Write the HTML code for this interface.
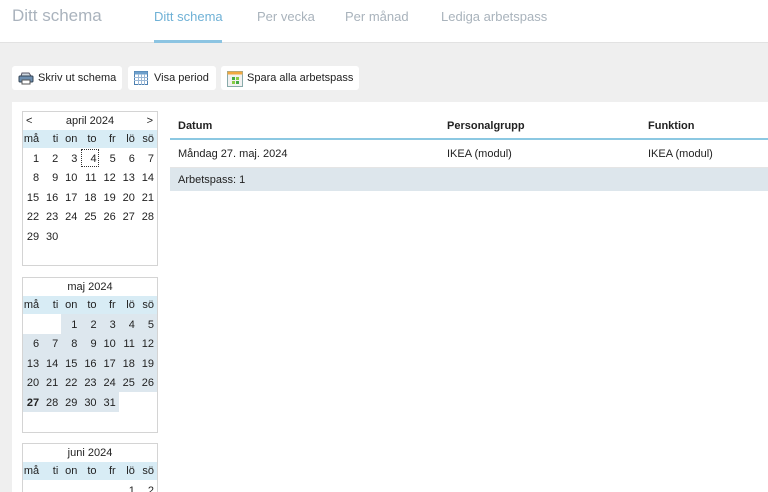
<!DOCTYPE html>
<html style="overflow:hidden;width:768px;height:492px"><head><meta charset="utf-8"><style>
*{box-sizing:border-box;margin:0;padding:0}
body{width:768px;height:492px;overflow:hidden;background:#efefef;font-family:"Liberation Sans",Arial,sans-serif;font-size:11px;color:#222;position:relative}
.hdr{position:absolute;left:0;top:0;width:768px;height:43px;background:#fff;border-bottom:1px solid #e2e2e2}
.title{position:absolute;left:12px;top:6px;font-size:17px;color:#aab3bd}
.tab{position:absolute;top:9px;font-size:13px;color:#a9b3bc}
.tab.act{color:#6fb1d6}
.ul{position:absolute;left:154px;top:40px;width:68px;height:3px;background:#8cc4e2}
.btn{position:absolute;top:66px;height:24px;background:#fff;border-radius:3px;font-size:11px;line-height:24px;padding-left:26px}
.btn svg{position:absolute;left:6px;top:5px}
.main{position:absolute;left:12px;top:102px;width:756px;height:390px;background:#fff}
.cal{position:absolute;left:22px;width:136px;border:1px solid #d4d4d4;background:#fff;overflow:hidden}
.ch{height:18px;line-height:18px;text-align:center;font-size:11px;position:relative}
.ch .l{position:absolute;left:3px}.ch .r{position:absolute;right:4px}
table.c{border-collapse:collapse;width:134px}
table.c td{width:19.1px;height:19.5px;text-align:right;padding-right:3px;font-size:11px;padding-top:2px}
table.c tr.d td{background:#d8ecf5;height:18px;padding-top:0}
table.c td.h{background:#dde7ee}
.t{position:absolute;left:170px;width:598px}
</style></head><body>
<div class="hdr">
<div class="title">Ditt schema</div>
<div class="tab act" style="left:154px">Ditt schema</div>
<div class="tab" style="left:257px">Per vecka</div>
<div class="tab" style="left:345px">Per månad</div>
<div class="tab" style="left:441px">Lediga arbetspass</div>
<div class="ul"></div>
</div>
<div class="btn" style="left:12px;width:110px"><svg width="16" height="14"><path d="M4 2h7l2 3H3z" fill="#cfd8e0" stroke="#556"/><rect x="1" y="5" width="14" height="6" rx="1" fill="#6d8eb0" stroke="#345"/><rect x="4" y="9" width="8" height="4" fill="#fff" stroke="#555"/></svg>Skriv ut schema</div>
<div class="btn" style="left:128px;width:88px"><svg width="14" height="14"><rect x="0.5" y="0.5" width="13" height="13" fill="#fff" stroke="#4c7fb0"/><rect x="0.5" y="0.5" width="13" height="3" fill="#6ea0cc"/><path d="M4.5 3v11M7.5 3v11M10.5 3v11M0 6.5h14M0 9.5h14" stroke="#9bb8d6"/></svg>Visa period</div>
<div class="btn" style="left:221px;width:138px"><svg width="16" height="16"><rect x="0.5" y="0.5" width="15" height="15" fill="#f1f1f1" stroke="#8aa"/><rect x="0.5" y="0.5" width="15" height="3" fill="#f0a840"/><rect x="5" y="6" width="3" height="3" fill="#4a4"/><rect x="9" y="6" width="3" height="3" fill="#8c4"/><rect x="5" y="10" width="3" height="3" fill="#8c4"/><rect x="9" y="10" width="3" height="3" fill="#4a4"/></svg>Spara alla arbetspass</div>
<div class="main"></div>

<div class="cal" style="top:111px;height:155px">
<div class="ch"><span class="l">&lt;</span>april 2024<span class="r">&gt;</span></div>
<table class="c">
<tr class="d"><td>må</td><td>ti</td><td>on</td><td>to</td><td>fr</td><td>lö</td><td>sö</td></tr>
<tr><td>1</td><td>2</td><td>3</td><td style="outline:1px dotted #333;outline-offset:-2px">4</td><td>5</td><td>6</td><td>7</td></tr>
<tr><td>8</td><td>9</td><td>10</td><td>11</td><td>12</td><td>13</td><td>14</td></tr>
<tr><td>15</td><td>16</td><td>17</td><td>18</td><td>19</td><td>20</td><td>21</td></tr>
<tr><td>22</td><td>23</td><td>24</td><td>25</td><td>26</td><td>27</td><td>28</td></tr>
<tr><td>29</td><td>30</td><td></td><td></td><td></td><td></td><td></td></tr>
</table></div>

<div class="cal" style="top:277px;height:156px">
<div class="ch">maj 2024</div>
<table class="c">
<tr class="d"><td>må</td><td>ti</td><td>on</td><td>to</td><td>fr</td><td>lö</td><td>sö</td></tr>
<tr><td></td><td></td><td class="h">1</td><td class="h">2</td><td class="h">3</td><td class="h">4</td><td class="h">5</td></tr>
<tr><td class="h">6</td><td class="h">7</td><td class="h">8</td><td class="h">9</td><td class="h">10</td><td class="h">11</td><td class="h">12</td></tr>
<tr><td class="h">13</td><td class="h">14</td><td class="h">15</td><td class="h">16</td><td class="h">17</td><td class="h">18</td><td class="h">19</td></tr>
<tr><td class="h">20</td><td class="h">21</td><td class="h">22</td><td class="h">23</td><td class="h">24</td><td class="h">25</td><td class="h">26</td></tr>
<tr><td class="h" style="font-weight:bold">27</td><td class="h">28</td><td class="h">29</td><td class="h">30</td><td class="h">31</td><td></td><td></td></tr>
</table></div>

<div class="cal" style="top:443px;height:49px;border-bottom:none">
<div class="ch">juni 2024</div>
<table class="c">
<tr class="d"><td>må</td><td>ti</td><td>on</td><td>to</td><td>fr</td><td>lö</td><td>sö</td></tr>
<tr><td></td><td></td><td></td><td></td><td></td><td>1</td><td>2</td></tr>
</table></div>

<div class="t" style="top:112px;height:28px;border-bottom:2px solid #8cc8e2;font-weight:bold">
<span style="position:absolute;left:8px;top:8px">Datum</span><span style="position:absolute;left:277px;top:8px">Personalgrupp</span><span style="position:absolute;left:478px;top:8px">Funktion</span></div>
<div class="t" style="top:142px;height:26px;border-bottom:1px solid #e5e5e5">
<span style="position:absolute;left:8px;top:6px">Måndag 27. maj. 2024</span><span style="position:absolute;left:277px;top:6px">IKEA (modul)</span><span style="position:absolute;left:478px;top:6px">IKEA (modul)</span></div>
<div class="t" style="top:168px;height:23px;background:#dde6ec">
<span style="position:absolute;left:8px;top:6px">Arbetspass: 1</span></div>
</body></html>
